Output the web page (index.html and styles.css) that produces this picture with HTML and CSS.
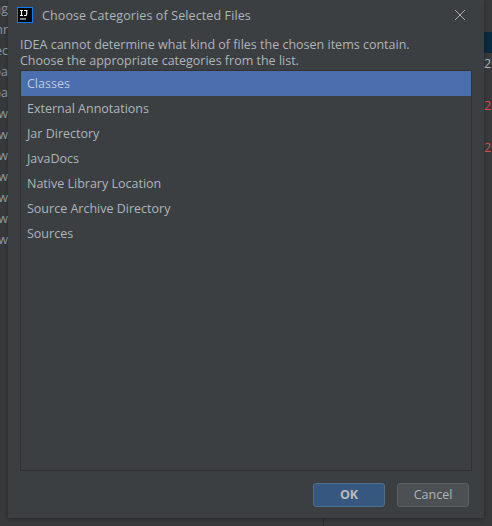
FILE: index.html
```html
<!DOCTYPE html>
<html lang="en">
<head>
<meta charset="utf-8">
<title>Choose Categories of Selected Files</title>
<link rel="stylesheet" href="styles.css">
</head>
<body>
<div class="bg-left">
  <span class="bg-l">ng</span>
  <span class="bg-l">nr</span>
  <span class="bg-l">ec</span>
  <span class="bg-l">oa</span>
  <span class="bg-l">oa</span>
  <span class="bg-l">w</span>
  <span class="bg-l">w</span>
  <span class="bg-l">w</span>
  <span class="bg-l">w</span>
  <span class="bg-l">w</span>
  <span class="bg-l">w</span>
  <span class="bg-l">w</span>
</div>
<div class="bg-right">
  <span class="bg-r sel"></span>
  <span class="bg-r g">27</span>
  <span class="bg-r"></span>
  <span class="bg-r red">27</span>
  <span class="bg-r"></span>
  <span class="bg-r red">27</span>
</div>
<div class="bg-line"></div>
<main class="dialog">
  <header class="titlebar">
    <svg class="logo" width="16" height="16" viewBox="0 0 16 16" aria-hidden="true">
      <rect x="0.5" y="0.5" width="15" height="15" fill="#000" stroke="#087cfa"/>
      <rect x="3" y="11.5" width="6" height="1" fill="#fff"/>
      <path d="M3 3.5h3M4.5 3.5v5M3 8.5h3M7 3.5h3.5M9.7 3.5v3.7q0 1.3-1.3 1.3h-1.4" fill="none" stroke="#fff" stroke-width="1.2"/>
    </svg>
    <span class="title">Choose Categories of Selected Files</span>
    <svg class="close" width="10" height="10" viewBox="0 0 10 10" aria-hidden="true">
      <path d="M0 0l10 10M10 0L0 10" stroke="#a9abad" stroke-width="1" fill="none"/>
    </svg>
  </header>
  <div class="body">
    <p class="msg">IDEA cannot determine what kind of files the chosen items contain.<br>Choose the appropriate categories from the list.</p>
    <ul class="list">
      <li class="item selected">Classes</li>
      <li class="item">External Annotations</li>
      <li class="item">Jar Directory</li>
      <li class="item">JavaDocs</li>
      <li class="item">Native Library Location</li>
      <li class="item">Source Archive Directory</li>
      <li class="item">Sources</li>
    </ul>
  </div>
  <footer class="actions">
    <button class="btn primary" type="button">OK</button>
    <button class="btn" type="button">Cancel</button>
  </footer>
</main>
</body>
</html>
```
FILE: styles.css
```css
* { box-sizing: border-box; }
html, body { margin: 0; padding: 0; }
body {
  width: 492px;
  height: 526px;
  overflow: hidden;
  position: relative;
  background: #37393b;
  font-family: "Open Sans", "Noto Sans", sans-serif;
  font-size: 12.5px;
  color: #adb5bc;
}
.bg-left, .bg-right {
  position: absolute;
  bottom: 0;
  width: 8px;
  overflow: hidden;
  display: flex;
  flex-direction: column;
}
.bg-left { left: 0; top: -2px; align-items: flex-end; }
.bg-right { right: 0; top: 0; padding-top: 32px; }
.bg-l, .bg-r {
  flex: none;
  height: 21px;
  line-height: 21px;
  white-space: nowrap;
}
.bg-l { color: #8d9aa6; }
.sel { background: #0d293e; }
.g { color: #a9b7c6; }
.red { color: #d4504c; }
.bg-line {
  position: absolute;
  left: 323px;
  top: 518px;
  bottom: 0;
  width: 1px;
  background: #2b2d2e;
}

.dialog {
  position: relative;
  margin-left: 8px;
  width: 476px;
  height: 518px;
  background: #3c3f41;
  display: flex;
  flex-direction: column;
  padding: 0 12px;
  box-shadow: 0 1px 4px rgba(0, 0, 0, 0.3);
}
.titlebar {
  height: 29px;
  flex: none;
  display: flex;
  align-items: center;
  gap: 9px;
  margin-left: -3px;
}
.logo { flex: none; }
.title {
  flex: 1;
  font-size: 12.5px;
  letter-spacing: 0.11px;
  white-space: nowrap;
  position: relative;
  top: 1px;
}
.close { flex: none; margin-right: 7px; }
.body {
  flex: 1;
  display: flex;
  flex-direction: column;
  min-height: 0;
  padding-top: 8px;
}
.msg { margin: 0; line-height: 16px; flex: none; height: 33px; }
.list {
  list-style: none;
  margin: 0;
  padding: 0;
  flex: 1;
  border: 1px solid #323232;
}
.item {
  height: 25px;
  line-height: 25px;
  padding: 0 6px;
}
.selected { background: #4b6eaf; color: #bbcbdc; }
.actions {
  height: 47px;
  flex: none;
  display: flex;
  justify-content: flex-end;
  align-items: center;
  gap: 12px;
  padding-right: 3px;
}
.btn {
  width: 72px;
  height: 24px;
  border: 1px solid #5e6060;
  border-radius: 3px;
  background: #4c5052;
  color: #adb5bc;
  font: inherit;
  padding: 0;
}
.primary {
  background: #365880;
  border-color: #4c708c;
  color: #bbbbbb;
  font-weight: 700;
}
```
